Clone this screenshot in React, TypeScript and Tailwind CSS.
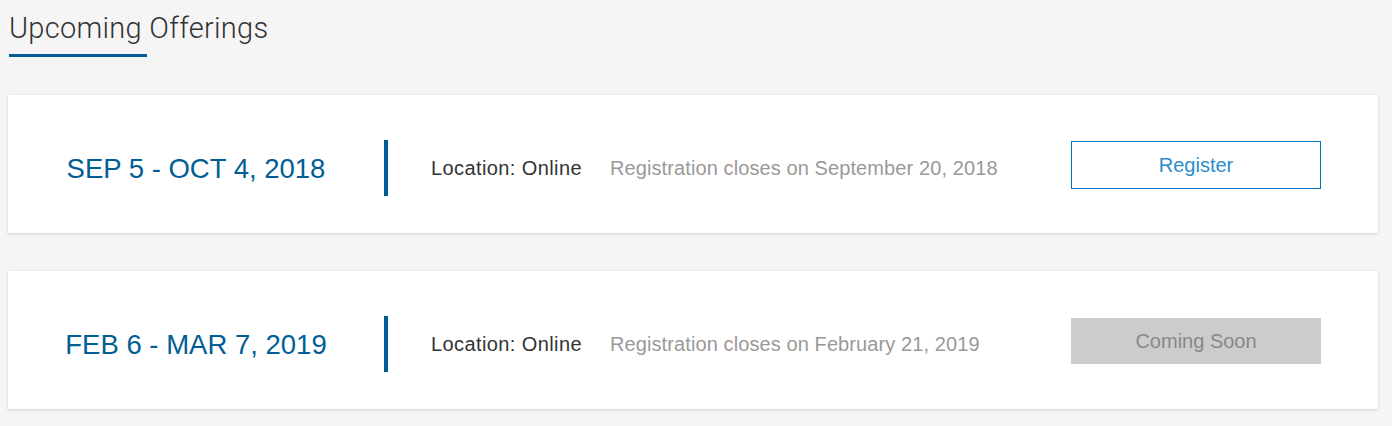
// Upcoming offerings list: heading with short accent rule, then one card per session.
const offerings = [
  {
    dates: 'SEP 5 - OCT 4, 2018',
    location: 'Online',
    closes: 'Registration closes on September 20, 2018',
    open: true,
  },
  {
    dates: 'FEB 6 - MAR 7, 2019',
    location: 'Online',
    closes: 'Registration closes on February 21, 2019',
    open: false,
  },
];

export default function App() {
  return (
    <div className="min-h-screen w-[1392px] bg-[#f5f5f5] pl-[8px] pr-[14px] pt-[10px] font-['Liberation_Sans',Arial,sans-serif]">
      <h2 className="pl-[1px] text-[29px] font-light leading-[36px] text-[#333] font-['Roboto','Liberation_Sans',sans-serif] tracking-[0.01em]">
        Upcoming Offerings
      </h2>
      <div className="mt-[8px] ml-[1px] h-[3px] w-[138px] bg-[#005e95]" aria-hidden="true" />

      <div className="mt-[38px] flex flex-col gap-[38px]">
        {offerings.map((o) => (
          <OfferingCard key={o.dates} {...o} />
        ))}
      </div>
    </div>
  );
}

function OfferingCard({
  dates,
  location,
  closes,
  open,
}: {
  dates: string;
  location: string;
  closes: string;
  open: boolean;
}) {
  return (
    <div className="flex h-[138px] items-center bg-white pt-[8px] shadow-[0_1px_3px_rgba(0,0,0,0.14)]">
      <div className="w-[376px] pt-[1px] text-center text-[27.5px] leading-[34px] text-[#005e95]">{dates}</div>
      <span className="h-[56px] w-[4px] bg-[#005e95]" aria-hidden="true" />
      <p className="ml-[43px] text-[20px] leading-[28px] tracking-[0.4px] text-[#333]">Location: {location}</p>
      <p className="ml-[28px] text-[20px] leading-[28px] tracking-[0.1px] text-[#999]">{closes}</p>
      <div className="ml-auto mr-[57px] mb-[6px]">
        {open ? (
          <button className="h-[48px] w-[250px] border border-[#0079c1] bg-white text-[20px] text-[#2b8ccb]">
            Register
          </button>
        ) : (
          <button disabled className="h-[46px] w-[250px] bg-[#cccccc] text-[20px] text-[#888]">
            Coming Soon
          </button>
        )}
      </div>
    </div>
  );
}
